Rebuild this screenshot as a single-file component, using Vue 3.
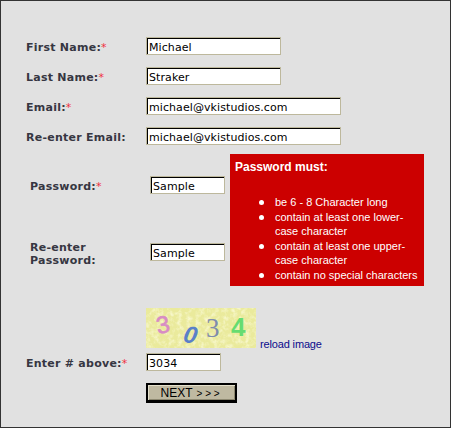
<script setup>
const topRows = [
  { label: 'First Name:', req: true, value: 'Michael', cls: 'mid' },
  { label: 'Last Name:', req: true, value: 'Straker', cls: 'mid' },
  { label: 'Email:', req: true, value: 'michael@vkistudios.com', cls: 'wide' },
  { label: 'Re-enter Email:', req: false, value: 'michael@vkistudios.com', cls: 'wide' },
]
const rules = [
  'be 6 - 8 Character long',
  'contain at least one lower-case character',
  'contain at least one upper-case character',
  'contain no special characters',
]
</script>

<template>
  <div class="card">
    <div v-for="r in topRows" :key="r.label" class="row">
      <label class="lbl">{{ r.label }}<span v-if="r.req" class="req">*</span></label>
      <input class="field" :class="r.cls" :value="r.value" />
    </div>

    <div class="pw">
      <div class="pw-left">
        <div class="row pw-row">
          <label class="lbl">Password:<span class="req">*</span></label>
          <input class="field short" value="Sample" />
        </div>
        <div class="row pw-row">
          <label class="lbl lbl-two">Re-enter Password:</label>
          <input class="field short" value="Sample" />
        </div>
      </div>
      <div class="notice">
        <div class="notice-title">Password must:</div>
        <ul>
          <li v-for="t in rules" :key="t">{{ t }}</li>
        </ul>
      </div>
    </div>

    <div class="captcha">
      <svg class="cap-img" width="110" height="40" viewBox="0 0 110 40">
        <defs>
          <filter id="noise" x="0" y="0" width="100%" height="100%">
            <feTurbulence type="fractalNoise" baseFrequency="0.22" numOctaves="3" seed="4" />
            <feColorMatrix type="matrix" values="0 0 0 0 0.97  0 0 0 0 0.97  0 0 0 0 0.70  0 0 0 1.8 -0.75" />
          </filter>
        </defs>
        <rect width="110" height="40" fill="#eaea9c" />
        <rect width="110" height="40" filter="url(#noise)" />
        <text x="10" y="25" transform="rotate(-10 16 16)" font-family="Liberation Sans" font-size="24" fill="#d88cc4" stroke="#d88cc4" stroke-width="0.7">3</text>
        <text x="38" y="35" transform="rotate(12 44 26)" font-family="Liberation Sans" font-weight="700" font-style="italic" font-size="24" fill="#5a80c8">0</text>
        <text x="60" y="29" font-family="Liberation Serif" font-size="27" fill="#7f8cac">3</text>
        <text x="85" y="28" font-family="Liberation Sans" font-weight="700" font-size="26" fill="#66dc70">4</text>
      </svg>
      <a class="reload">reload image</a>
    </div>

    <div class="row enter">
      <label class="lbl">Enter # above:<span class="req">*</span></label>
      <input class="field short" value="3034" />
    </div>

    <button class="next" type="button">NEXT <span class="arrows">&gt;&gt;&gt;</span></button>
  </div>
</template>

<style>
html, body { margin: 0; padding: 0; background: #fff; }
</style>

<style scoped>
.card {
  box-sizing: border-box;
  width: 451px;
  height: 428px;
  border: 1px solid #333;
  background: #e1e1e1;
  padding: 36px 0 0 25px;
  font-family: "DejaVu Sans", sans-serif;
  font-size: 11px;
  color: #000;
}
.row {
  display: flex;
  align-items: center;
  height: 18px;
  margin-bottom: 12px;
}
.lbl {
  width: 120px;
  flex: none;
  padding-top: 2px;
  font-weight: 700;
  font-size: 11px;
  line-height: 13px;
  letter-spacing: 0.25px;
  color: #363642;
}
.lbl-two { padding-top: 4px; }
.req { color: #f03040; font-weight: 400; }
.field {
  box-sizing: border-box;
  height: 18px;
  padding: 2px 0 0 2px;
  margin: 0;
  border: 1px solid #bdb89c;
  box-shadow: inset 1px 1px 0 #000;
  background: #fff;
  font-family: "DejaVu Sans", sans-serif;
  font-size: 11px;
  letter-spacing: 0.08px;
  color: #000;
  outline: none;
}
.mid { width: 135px; }
.wide { width: 195px; }
.short { width: 75px; }

.pw {
  display: flex;
  margin-top: -3px;
}
.pw-left {
  width: 204px;
  height: 132px;
  flex: none;
  padding: 22px 0 0 4px;
  box-sizing: border-box;
}
.pw-row { margin-bottom: 49px; }
.notice {
  box-sizing: border-box;
  width: 194px;
  height: 132px;
  background: #cc0000;
  color: #fff;
  font-family: "Liberation Sans", sans-serif;
  font-size: 11px;
  padding: 6px 5px;
}
.notice-title {
  font-size: 12px;
  font-weight: 700;
  line-height: 14px;
}
.notice ul {
  list-style: none;
  margin: 21px 0 0;
  padding: 0 0 0 24px;
  line-height: 14.5px;
}
.notice li {
  display: flex;
  gap: 11px;
}
.notice li::before {
  content: "";
  flex: none;
  width: 5px;
  height: 5px;
  margin-top: 5px;
  border-radius: 50%;
  background: #fff;
}

.captcha {
  display: flex;
  align-items: flex-end;
  height: 40px;
  margin: 22px 0 0 120px;
  gap: 4px;
}
.cap-img { display: block; flex: none; }
.reload {
  font-family: "Liberation Sans", sans-serif;
  font-size: 11px;
  line-height: 11px;
  margin-bottom: -2px;
  letter-spacing: -0.15px;
  color: #0b0b8c;
}
.enter { margin: 5px 0 12px; }
.next {
  display: block;
  box-sizing: border-box;
  width: 91px;
  height: 20px;
  margin: 0 0 0 120px;
  padding: 0;
  border-style: solid;
  border-color: #000;
  border-width: 2px 2px 3px 2px;
  box-shadow: inset 1px 1px 0 #e4e0cc, inset -1px -1px 0 #8d8870;
  background: #bfb9a1;
  font-family: "Liberation Sans", sans-serif;
  font-size: 12px;
  color: #000;
}
.arrows { font-size: 10px; letter-spacing: 2.8px; margin-left: 1px; }
</style>
